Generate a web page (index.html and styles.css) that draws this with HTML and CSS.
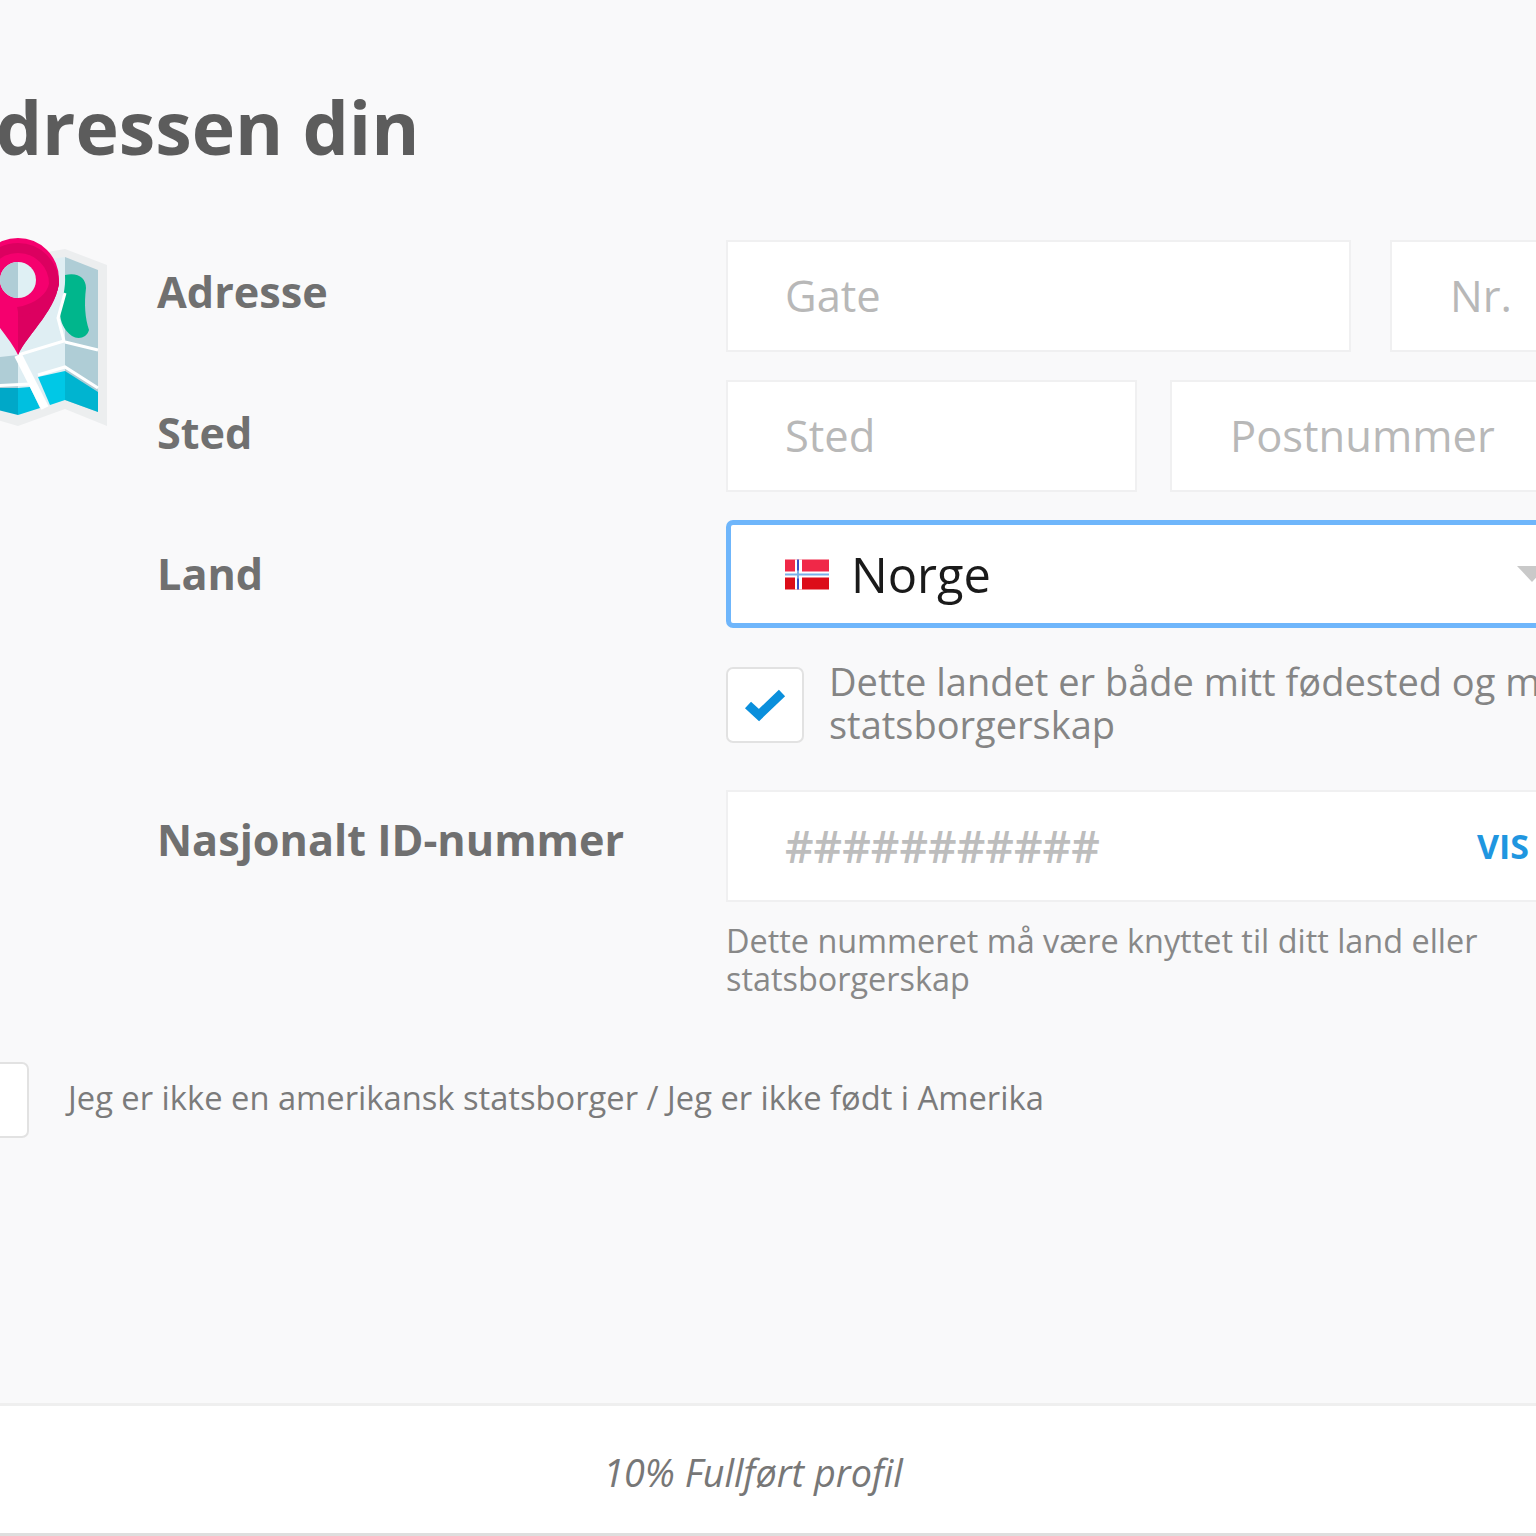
FILE: index.html
```html
<!DOCTYPE html>
<html lang="no">
<head>
<meta charset="utf-8">
<title>Adressen din</title>
<link rel="stylesheet" href="styles.css">
</head>
<body>
<div class="page">
  <main class="main">
    <h1 class="title">Adressen din</h1>
    <div class="form">
      <svg class="map" viewBox="0 0 130 200" aria-hidden="true">
        <path d="M-10 24 L65 11 L107 27 V188 L65 171 L18 188 L-10 180Z" fill="#eceeef"/>
        <path d="M-10 30 L65 19 V162 L18 177 L-10 170Z" fill="#dfeef3"/>
        <path d="M65 19 L98 32 V174 L65 162Z" fill="#afcdd6"/>
        <path d="M-10 120 L18 117 V150 L-10 150Z" fill="#afcdd6"/>
        <path d="M65 37 C78 34 86 40 86 50 C84 66 85 80 89 92 C87 100 78 102 72 98 C64 92 60 84 60 74 C62 62 66 50 65 37Z" fill="#00b68c"/>
        <path d="M38 139 L65 133 V162 L50 167Z" fill="#00c8e6"/>
        <path d="M65 133 L98 154 V174 L65 162Z" fill="#00b4d0"/>
        <path d="M18 150 L30 149 L40 170 L18 177Z" fill="#00c0e0"/>
        <path d="M-10 150 L18 150 V177 L-10 170Z" fill="#00a8c8"/>
        <path d="M18 117 L45 170" stroke="#fff" stroke-width="8" fill="none"/>
        <path d="M18 117 L64 103 L58 80 L65 55 M38 137 L65 129 L98 150 M-10 148 L30 146 M65 104 L98 112" stroke="#fff" stroke-width="3" fill="none"/>
        <path d="M18 117 C8 95 -23 70 -23 41 A41 41 0 0 1 59 41 C59 70 28 95 18 117Z" fill="#f5006e"/>
        <path d="M18 117 C28 95 59 70 59 41 L50 60 L18 74Z" fill="#dc0060"/>
        <path d="M-18 46 A36 36 0 0 1 54 46 C52 58 40 70 18 74" fill="none" stroke="#dc0060" stroke-width="10"/>
        <circle cx="18" cy="42" r="18" fill="#dff0f4"/>
        <path d="M18 24 A18 18 0 0 0 18 60Z" fill="#afcdd6"/>
      </svg>

      <div class="row row-address">
        <label class="label">Adresse</label>
        <div class="fields">
          <div class="input input-street">Gate</div>
          <div class="input input-number">Nr.</div>
        </div>
      </div>

      <div class="row row-place">
        <label class="label">Sted</label>
        <div class="fields fields-place">
          <div class="input input-city">Sted</div>
          <div class="input input-zip">Postnummer</div>
        </div>
      </div>

      <div class="row row-country">
        <label class="label">Land</label>
        <div class="select">
          <svg class="flag" viewBox="0 0 44 30" aria-hidden="true">
            <rect width="44" height="14" fill="#f02848"/>
            <rect y="14" width="44" height="16" fill="#dc0c18"/>
            <rect x="0" y="12" width="44" height="6" fill="#fff"/>
            <rect x="10" y="0" width="7" height="30" fill="#fff"/>
            <rect x="0" y="14" width="44" height="2" fill="#7ab0e8"/>
            <rect x="12" y="0" width="2" height="30" fill="#3a4fc4"/>
            <rect x="12" y="11" width="2" height="8" fill="#7ab0e8"/>
          </svg>
          <span class="select-value">Norge</span>
          <span class="caret"></span>
        </div>
      </div>

      <div class="row row-check">
        <div class="spacer"></div>
        <div class="check-field">
          <div class="checkbox">
            <svg class="tick" viewBox="0 0 44 34" aria-hidden="true"><path d="M5 17 L16 27 L39 5" fill="none" stroke="#0a8fdc" stroke-width="9"/></svg>
          </div>
          <div class="check-text">Dette landet er både mitt fødested og mitt<br>statsborgerskap</div>
        </div>
      </div>

      <div class="row row-id">
        <label class="label">Nasjonalt ID-nummer</label>
        <div class="input input-id"><span class="hash">###########</span><span class="vis">VIS</span></div>
      </div>

      <div class="row row-help">
        <div class="spacer"></div>
        <p class="help">Dette nummeret må være knyttet til ditt land eller<br>statsborgerskap</p>
      </div>

      <div class="us-row">
        <div class="checkbox checkbox-us"></div>
        <span class="us-text">Jeg er ikke en amerikansk statsborger / Jeg er ikke født i Amerika</span>
      </div>
    </div>
  </main>
  <footer class="footer"><em class="progress">10% Fullført profil</em></footer>
</div>
</body>
</html>
```
FILE: styles.css
```css
* { box-sizing: border-box; }
html, body { margin: 0; padding: 0; }
body { font-family: "Open Sans", "Noto Sans", sans-serif; background: #f9f9fa; }
.page { width: 1536px; height: 1536px; overflow: hidden; display: flex; flex-direction: column; }
.main { flex: 1; padding-top: 80px; min-height: 0; }
.title { margin: 0 0 0 -55px; font-size: 73.4px; line-height: 94px; font-weight: 700; color: #5c5c5c; white-space: nowrap; }
.form { position: relative; margin-top: 66px; padding-left: 157px; width: 1800px; }
.map { position: absolute; left: 0; top: -2px; width: 130px; height: 200px; overflow: hidden; }
.row { display: flex; align-items: flex-start; }
.label { width: 570px; margin-right: -1px; flex: none; font-size: 43.2px; line-height: 56px; font-weight: 700; color: #707070; padding-top: 24px; }
.spacer { width: 570px; margin-right: -1px; flex: none; }
.fields { display: flex; gap: 39px; }
.fields-place { gap: 33px; }
.input { height: 112px; padding: 0 57px; background: #fff; border: 2px solid #f0f0f1; font-size: 43.5px; line-height: 108px; color: #b8b8b8; white-space: nowrap; }
.input-street { width: 625px; }
.input-number { width: 300px; padding-left: 58px; }
.input-city { width: 411px; }
.input-zip { width: 500px; padding-left: 58px; }
.row-place { margin-top: 28px; }
.row-place .label { padding-top: 25px; }
.row-country { margin-top: 28px; }
.row-country .label { padding-top: 26px; }
.select { display: flex; align-items: center; width: 900px; height: 108px; padding-left: 54px; background: #fff; border: 5px solid #6fb6fb; border-radius: 7px; }
.flag { width: 44px; height: 31px; flex: none; }
.select-value { margin-left: 22px; font-size: 48.8px; line-height: 60px; color: #1a1a1a; }
.caret { position: absolute; left: 1517px; top: 326px; width: 0; height: 0; border-left: 15px solid transparent; border-right: 15px solid transparent; border-top: 16px solid #c9c9c9; }
.row-check { margin-top: 39px; }
.check-field { display: flex; gap: 25px; }
.checkbox { width: 78px; height: 76px; flex: none; display: flex; align-items: center; justify-content: center; background: #fff; border: 2px solid #e2e2e2; border-radius: 7px; }
.tick { width: 44px; height: 34px; }
.check-text { font-size: 38px; line-height: 43px; color: #858585; white-space: nowrap; margin-top: -7px; }
.row-id { margin-top: 44px; }
.row-id .label { padding-top: 22px; }
.input-id { position: relative; width: 900px; }
.hash { font-size: 44.3px; font-weight: 600; color: #bdbdbd; }
.vis { position: absolute; left: 749px; top: 0; font-size: 34px; font-weight: 700; color: #1f96e0; }
.row-help { margin-top: 19px; }
.help { margin: 0; font-size: 32.4px; line-height: 38px; color: #888; white-space: nowrap; }
.us-row { display: flex; align-items: center; gap: 39px; margin: 65px 0 0 -205px; }
.checkbox-us { width: 77px; height: 76px; }
.us-text { font-size: 32.7px; line-height: 44px; color: #7b7b7b; white-space: nowrap; margin-top: -4px; }
.footer { flex: none; height: 133px; display: flex; align-items: center; justify-content: center; padding-right: 30px; padding-top: 7px; background: #fff; border-top: 3px solid #efefef; border-bottom: 3px solid #dedede; }
.progress { font-size: 37.8px; line-height: 50px; font-style: italic; color: #777; }
```
